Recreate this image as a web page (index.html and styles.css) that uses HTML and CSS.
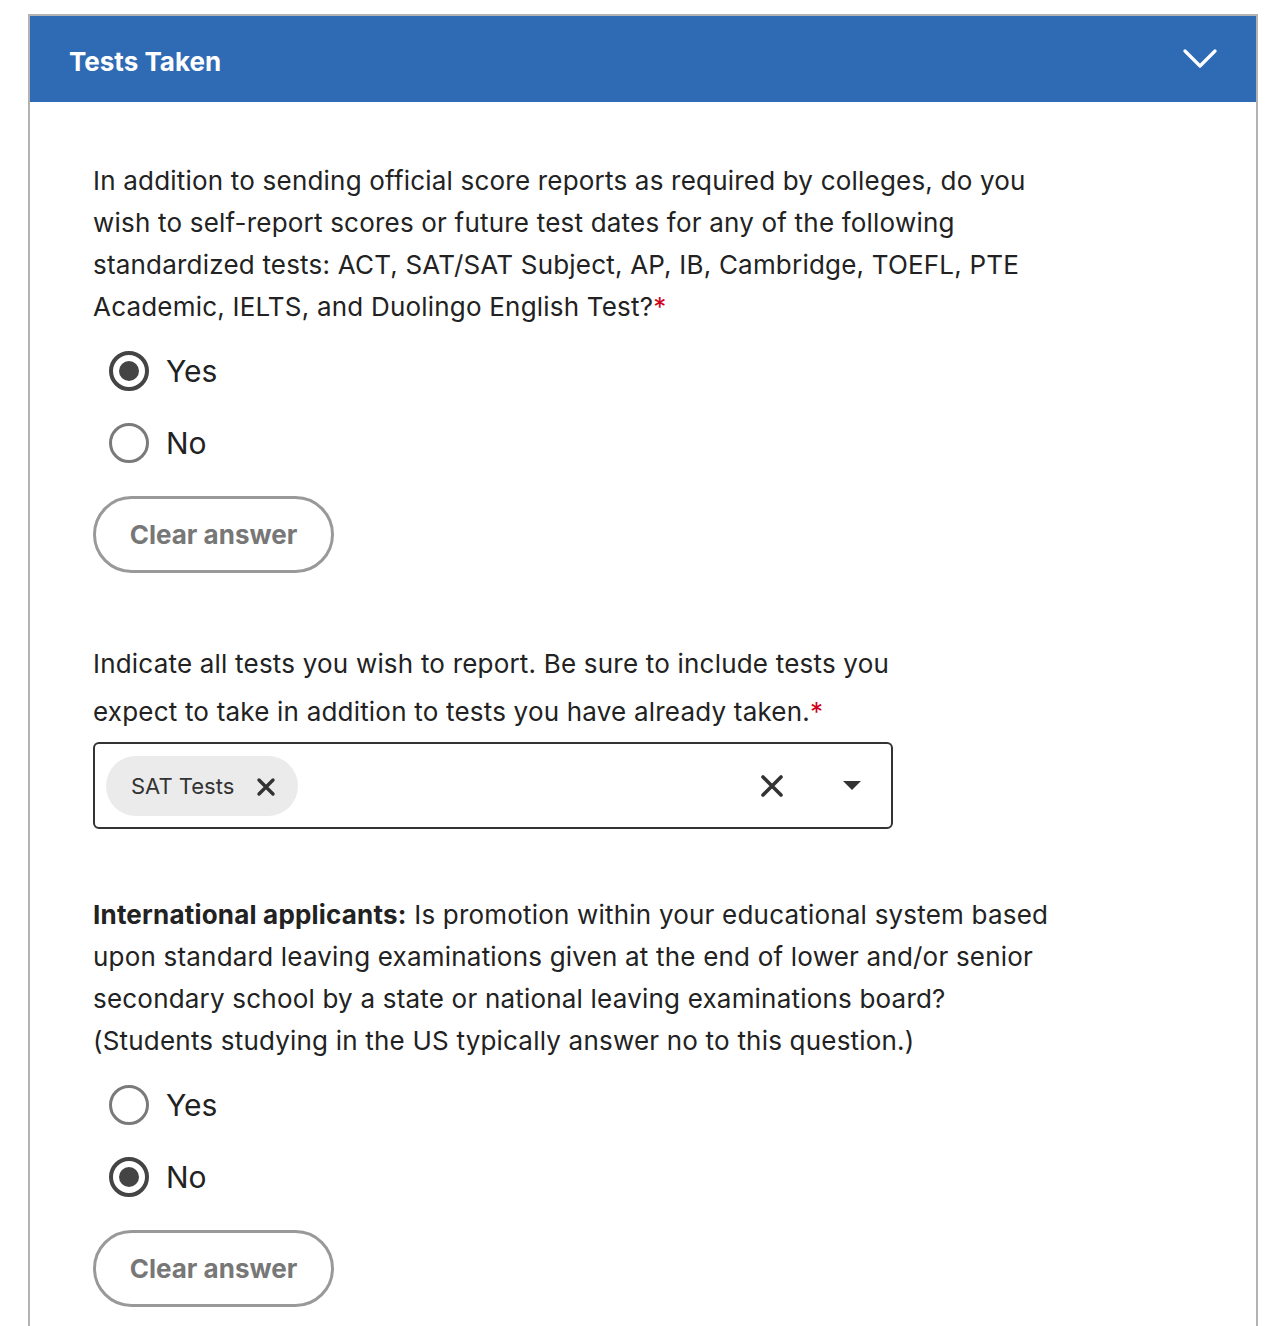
FILE: index.html
```html
<!DOCTYPE html>
<html>
<head>
  <meta charset="utf-8">
  <title>Testing</title>
  <link rel="stylesheet" href="styles.css">
</head>
<body>

  <section class="card">
    <header class="card-header">
      <h2 class="card-title">Tests Taken</h2>
      <svg class="chevron" width="34" height="20" viewBox="0 0 34 20">
        <polyline points="2,2 17,17 32,2" fill="none" stroke="#fff" stroke-width="3.2" stroke-linecap="round" stroke-linejoin="round"/>
      </svg>
    </header>

    <div class="card-body">

      <!-- self report question -->
      <div class="question">
        <p class="prompt">In addition to sending official score reports as required by colleges, do you wish to self-report scores or future test dates for any of the following standardized tests: ACT, SAT/SAT Subject, AP, IB, Cambridge, TOEFL, PTE Academic, IELTS, and Duolingo English Test?<span class="req">*</span></p>
        <div class="options">
          <label class="radio"><input type="radio" name="selfreport" checked> Yes</label>
          <label class="radio"><input type="radio" name="selfreport"> No</label>
        </div>
        <button type="button" class="clear-btn">Clear answer</button>
      </div>

      <!-- tests to report -->
      <div class="question">
        <p class="prompt prompt-tall">Indicate all tests you wish to report. Be sure to include tests you expect to take in addition to tests you have already taken.<span class="req">*</span></p>
        <div class="multi-select">
          <span class="chip">SAT Tests
            <svg width="20" height="20" viewBox="0 0 20 20">
              <path d="M3 3 L17 17 M17 3 L3 17" stroke="#333" stroke-width="3.4" stroke-linecap="round"/>
            </svg>
          </span>
          <span class="spacer"></span>
          <svg class="clear-all" width="24" height="24" viewBox="0 0 24 24">
            <path d="M3 3 L21 21 M21 3 L3 21" stroke="#333" stroke-width="3.6" stroke-linecap="round"/>
          </svg>
          <svg class="caret" width="18" height="10" viewBox="0 0 18 10">
            <polygon points="0,0 18,0 9,9" fill="#333"/>
          </svg>
        </div>
      </div>

      <!-- leaving exams -->
      <div class="question">
        <p class="prompt"><b>International applicants:</b> Is promotion within your educational system based upon standard leaving examinations given at the end of lower and/or senior secondary school by a state or national leaving examinations board?<br>(Students studying in the US typically answer no to this question.)</p>
        <div class="options">
          <label class="radio"><input type="radio" name="leaving"> Yes</label>
          <label class="radio"><input type="radio" name="leaving" checked> No</label>
        </div>
        <button type="button" class="clear-btn">Clear answer</button>
      </div>

    </div>
  </section>

</body>
</html>
```

FILE: styles.css
```css
body {
  margin: 0;
  padding: 14px 28px 0;
  font-family: Inter, "Liberation Sans", sans-serif;
  color: #222;
  background: #fff;
}

.card {
  border: 2px solid #b3b3b3;
  border-bottom: none;
}

.card-header {
  height: 86px;
  background-color: #2f6bb5;
  display: flex;
  align-items: center;
  justify-content: space-between;
  padding: 0 39px 0 39px;
}

.card-title {
  margin: 0;
  color: #fff;
  font-size: 26px;
  font-weight: bold;
  padding-top: 4px;
}

.chevron {
  display: block;
}

.card-body {
  padding: 58px 63px 40px;
}

.question + .question {
  margin-top: 67px;
}

.question:last-child {
  margin-top: 65px;
}

.prompt {
  margin: 0;
  max-width: 975px;
  font-size: 26px;
  line-height: 42px;
  letter-spacing: 0.2px;
}

.prompt-tall {
  max-width: 800px;
  line-height: 48px;
}

.req {
  color: #d0021b;
}

.options {
  margin-top: 7px;
}

.radio {
  display: flex;
  align-items: center;
  height: 72px;
  padding-left: 16px;
  gap: 17px;
  font-size: 30px;
  cursor: pointer;
}

.radio input {
  appearance: none;
  box-sizing: border-box;
  width: 40px;
  height: 40px;
  margin: 0;
  border: 3.5px solid #7a7a7a;
  border-radius: 50%;
  display: grid;
  place-content: center;
}

.radio input:checked {
  border-color: #444;
  border-width: 4px;
}

.radio input:checked::before {
  content: "";
  width: 20px;
  height: 20px;
  border-radius: 50%;
  background: #444;
}

.clear-btn {
  margin-top: 17px;
  width: 241px;
  height: 77px;
  border: 3px solid #999;
  border-radius: 40px;
  background: #fff;
  color: #777;
  font-family: inherit;
  font-size: 26px;
  font-weight: bold;
  cursor: pointer;
}

.multi-select {
  margin-top: 6px;
  box-sizing: border-box;
  width: 800px;
  height: 87px;
  border: 2px solid #333;
  border-radius: 6px;
  display: flex;
  align-items: center;
  padding: 0 30px 0 11px;
}

.chip {
  height: 60px;
  display: flex;
  align-items: center;
  gap: 22px;
  padding: 0 22px 0 25px;
  border-radius: 30px;
  background: #ebebeb;
  font-size: 22px;
  color: #333;
}

.chip svg {
  margin-top: 3px;
}

.spacer {
  flex: 1;
}

.clear-all {
  margin-right: 59px;
}
```
